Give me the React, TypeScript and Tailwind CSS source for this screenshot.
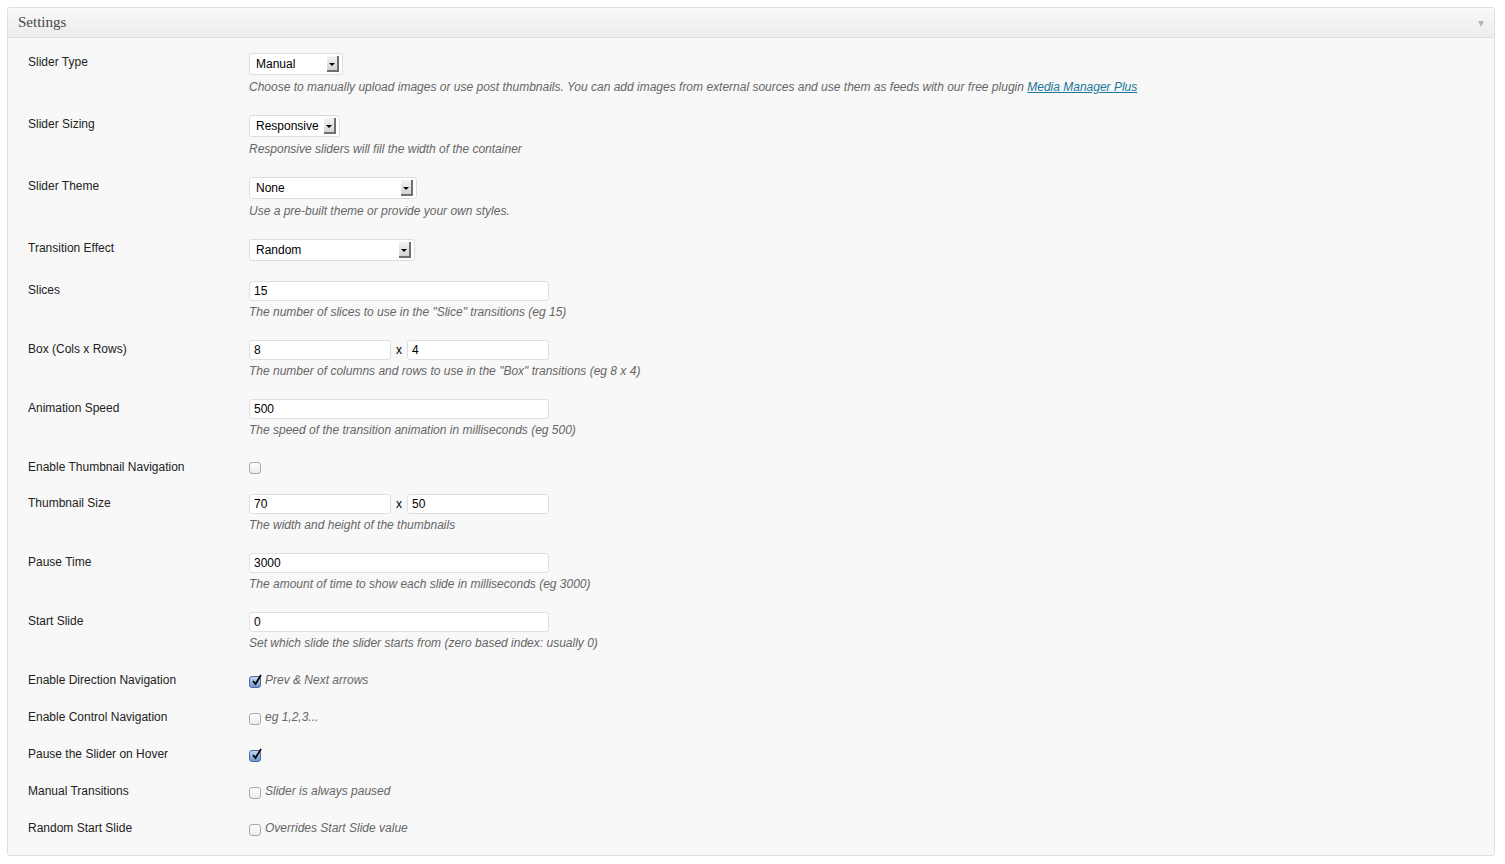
import React from 'react';

const sans = { fontFamily: '"Liberation Sans", Arial, sans-serif' };

function SelectBox({ value, width }: { value: string; width: string }) {
  return (
    <div className={`flex h-[22px] items-center justify-between rounded-[3px] border border-[#dcdcdc] bg-white pl-[6px] pr-[3px] ${width}`}>
      <span className="text-[12px] text-black">{value}</span>
      <span className="flex h-[16px] w-[12px] items-center justify-center border-b-2 border-r-2 border-[#6f6f6f] bg-gradient-to-b from-[#f4f4f4] to-[#d4d4d4]">
        <span className="mt-[2px] h-0 w-0 border-x-[3px] border-t-[3px] border-x-transparent border-t-black" />
      </span>
    </div>
  );
}

function TextBox({ value, width }: { value: string; width: string }) {
  return (
    <div className={`flex h-[20px] items-center rounded-[3px] border border-[#dfdfdf] bg-white px-[4px] text-[12px] text-black ${width}`}>
      {value}
    </div>
  );
}

function Check({ checked }: { checked?: boolean }) {
  if (checked) {
    return (
      <span className="relative inline-block h-[12px] w-[12px] shrink-0 rounded-[3px] border border-[#4d6a9a] bg-gradient-to-b from-[#c4d9f4] to-[#6e97d2]">
        <svg viewBox="0 0 12 12" className="absolute -top-[3px] left-[1px] h-[13px] w-[12px]">
          <path d="M2 6.5 L4.5 9.5 L10 0.5" fill="none" stroke="#000" strokeWidth="1.8" />
        </svg>
      </span>
    );
  }
  return <span className="inline-block h-[12px] w-[12px] shrink-0 rounded-[3px] border border-[#a9a9a9] bg-gradient-to-b from-white to-[#ececec]" />;
}

function Desc({ children, mt = 'mt-[3px]' }: { children: React.ReactNode; mt?: string }) {
  return <div className={`${mt} text-[12px] italic leading-[16px] text-[#666]`}>{children}</div>;
}

function Row({ label, children, tight }: { label: string; children: React.ReactNode; tight?: boolean }) {
  return (
    <div className="flex py-[10px]">
      <div className={`w-[221px] shrink-0 text-[12px] text-[#222] ${tight ? 'leading-[16px]' : 'leading-[17px]'}`}>{label}</div>
      <div className="-mt-px mb-px flex-1">{children}</div>
    </div>
  );
}

function CheckRow({ label, checked, note, tight }: { label: string; checked?: boolean; note?: string; tight?: boolean }) {
  return (
    <Row label={label} tight={tight}>
      <div className={`flex items-center gap-[4px] ${tight ? 'h-[16px]' : 'h-[17px]'}`}>
        <span className="mt-[4px] flex"><Check checked={checked} /></span>
        {note && <span className="mt-[1px] text-[12px] italic text-[#666]">{note}</span>}
      </div>
    </Row>
  );
}

function PairInputs({ a, b }: { a: string; b: string }) {
  return (
    <div className="flex items-center">
      <TextBox value={a} width="w-[142px]" />
      <span className="mx-[5px] text-[12px] text-black">x</span>
      <TextBox value={b} width="w-[142px]" />
    </div>
  );
}

export default function App() {
  return (
    <div className="min-h-[864px] bg-white pl-[7px] pr-[10px] pt-[7px]" style={sans}>
      <div className="rounded-[3px] border border-[#dfdfdf] bg-[#f8f8f8]">
        <div className="flex h-[30px] items-center justify-between border-b border-[#dfdfdf] bg-gradient-to-b from-[#f9f9f9] to-[#ececec] pl-[10px] pr-[10px]">
          <h3 className="text-[15px] text-[#464646]" style={{ fontFamily: '"Liberation Serif", Georgia, serif' }}>Settings</h3>
          <span className="mt-[2px] h-0 w-0 border-x-[3.5px] border-t-[6px] border-x-transparent border-t-[#b5b5b5]" />
        </div>
        <div className="pb-[8px] pl-[20px] pt-[6px]">
          <Row label="Slider Type">
            <SelectBox value="Manual" width="w-[94px]" />
            <Desc mt="mt-[4px]">
              Choose to manually upload images or use post thumbnails. You can add images from external sources and use them as feeds with our free plugin{' '}
              <a className="text-[#21759b] underline" href="#">Media Manager Plus</a>
            </Desc>
          </Row>
          <Row label="Slider Sizing">
            <SelectBox value="Responsive" width="w-[91px]" />
            <Desc mt="mt-[4px]">Responsive sliders will fill the width of the container</Desc>
          </Row>
          <Row label="Slider Theme">
            <SelectBox value="None" width="w-[168px]" />
            <Desc mt="mt-[4px]">Use a pre-built theme or provide your own styles.</Desc>
          </Row>
          <Row label="Transition Effect">
            <SelectBox value="Random" width="w-[166px]" />
          </Row>
          <Row label="Slices">
            <TextBox value="15" width="w-[300px]" />
            <Desc>The number of slices to use in the "Slice" transitions (eg 15)</Desc>
          </Row>
          <Row label="Box (Cols x Rows)">
            <PairInputs a="8" b="4" />
            <Desc>The number of columns and rows to use in the "Box" transitions (eg 8 x 4)</Desc>
          </Row>
          <Row label="Animation Speed">
            <TextBox value="500" width="w-[300px]" />
            <Desc>The speed of the transition animation in milliseconds (eg 500)</Desc>
          </Row>
          <CheckRow label="Enable Thumbnail Navigation" tight />
          <Row label="Thumbnail Size">
            <PairInputs a="70" b="50" />
            <Desc>The width and height of the thumbnails</Desc>
          </Row>
          <Row label="Pause Time">
            <TextBox value="3000" width="w-[300px]" />
            <Desc>The amount of time to show each slide in milliseconds (eg 3000)</Desc>
          </Row>
          <Row label="Start Slide">
            <TextBox value="0" width="w-[300px]" />
            <Desc>Set which slide the slider starts from (zero based index: usually 0)</Desc>
          </Row>
          <CheckRow label="Enable Direction Navigation" checked note="Prev & Next arrows" />
          <CheckRow label="Enable Control Navigation" note="eg 1,2,3..." />
          <CheckRow label="Pause the Slider on Hover" checked />
          <CheckRow label="Manual Transitions" note="Slider is always paused" />
          <CheckRow label="Random Start Slide" note="Overrides Start Slide value" />
        </div>
      </div>
    </div>
  );
}
